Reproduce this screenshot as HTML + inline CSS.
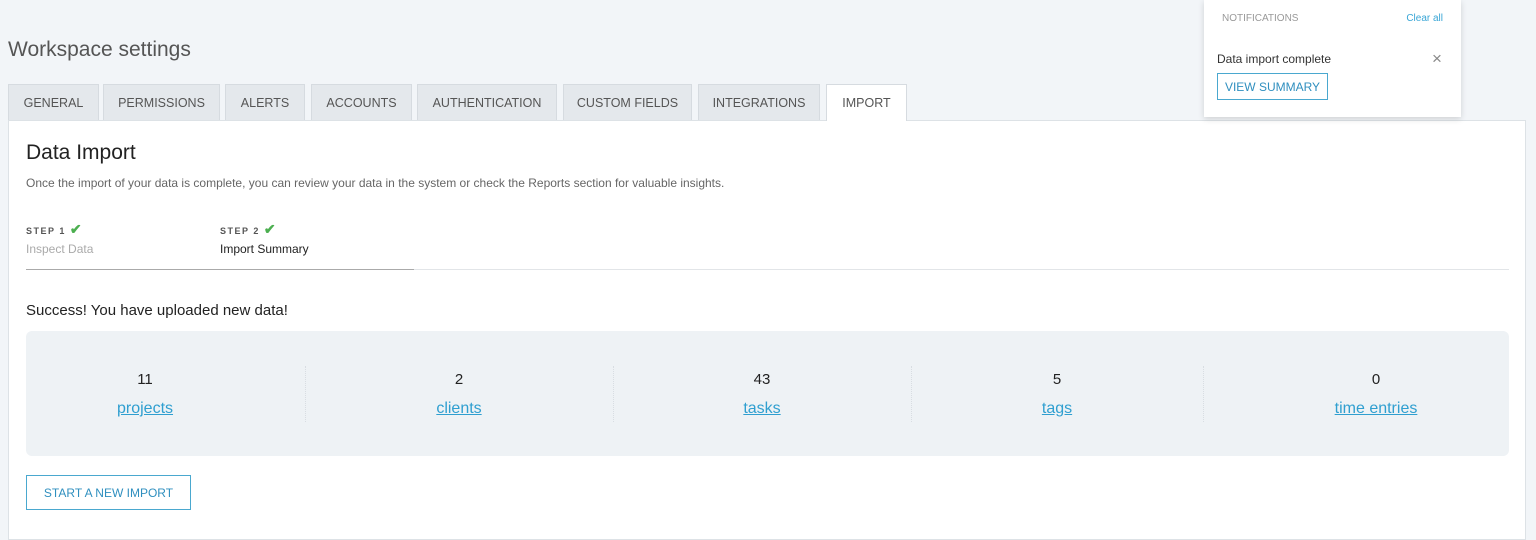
<!DOCTYPE html>
<html><head><style>
*{margin:0;padding:0;box-sizing:border-box}
body{width:1536px;height:521px;overflow:hidden;background:#f2f5f8;font-family:"Liberation Sans",sans-serif;position:relative;color:#333}
.abs{position:absolute}
.tab{position:absolute;top:84px;height:36px;background:#e4e8ec;border:1px solid #d6dbe0;border-bottom:none;font-size:12.5px;color:#555;display:flex;align-items:center;justify-content:center}
.panel{position:absolute;left:8px;top:120px;width:1518px;height:420px;background:#fff;border:1px solid #dde2e6}
.stat{position:absolute;top:371px;text-align:center;width:200px}
.stat .n{font-size:15px;color:#222}
.stat a{display:block;margin-top:12px;font-size:16px;color:#2f9fd0;text-decoration:underline}
.div{position:absolute;top:366px;height:56px;border-left:1px dotted #d8dde2}
</style></head><body>
<div class="abs" style="left:8px;top:38px;font-size:21px;color:#555">Workspace settings</div>
<div class="panel"></div>
<div class="tab" style="left:8px;width:91px">GENERAL</div>
<div class="tab" style="left:103px;width:117px">PERMISSIONS</div>
<div class="tab" style="left:225px;width:80px">ALERTS</div>
<div class="tab" style="left:311px;width:101px">ACCOUNTS</div>
<div class="tab" style="left:417px;width:140px">AUTHENTICATION</div>
<div class="tab" style="left:563px;width:129px">CUSTOM FIELDS</div>
<div class="tab" style="left:698px;width:122px">INTEGRATIONS</div>
<div class="tab" style="left:826px;width:81px;background:#fff;height:37px">IMPORT</div>
<div class="abs" style="left:26px;top:141px;font-size:21px;color:#222">Data Import</div>
<div class="abs" style="left:26px;top:176px;font-size:12px;color:#666">Once the import of your data is complete, you can review your data in the system or check the Reports section for valuable insights.</div>
<div class="abs" style="left:26px;top:221px;font-size:9px;letter-spacing:1.5px;color:#555;font-weight:bold">STEP 1 <span style="color:#4caf50;font-size:14px">✔</span></div>
<div class="abs" style="left:220px;top:221px;font-size:9px;letter-spacing:1.5px;color:#555;font-weight:bold">STEP 2 <span style="color:#4caf50;font-size:14px">✔</span></div>
<div class="abs" style="left:26px;top:242px;font-size:12px;color:#aaa">Inspect Data</div>
<div class="abs" style="left:220px;top:242px;font-size:12px;color:#222">Import Summary</div>
<div class="abs" style="left:26px;top:269px;width:1483px;height:1px;background:#e2e5e8"></div>
<div class="abs" style="left:26px;top:269px;width:388px;height:1px;background:#aaa"></div>
<div class="abs" style="left:26px;top:302px;font-size:15px;color:#222">Success! You have uploaded new data!</div>
<div class="abs" style="left:26px;top:331px;width:1483px;height:125px;background:#eef2f5;border-radius:6px"></div>
<div class="div" style="left:305px"></div><div class="div" style="left:613px"></div><div class="div" style="left:911px"></div><div class="div" style="left:1203px"></div>
<div class="stat" style="left:45px"><div class="n">11</div><a>projects</a></div>
<div class="stat" style="left:359px"><div class="n">2</div><a>clients</a></div>
<div class="stat" style="left:662px"><div class="n">43</div><a>tasks</a></div>
<div class="stat" style="left:957px"><div class="n">5</div><a>tags</a></div>
<div class="stat" style="left:1276px"><div class="n">0</div><a>time entries</a></div>
<div class="abs" style="left:26px;top:475px;width:165px;height:35px;border:1px solid #4aa8cf;font-size:12px;color:#2f8fbf;display:flex;align-items:center;justify-content:center">START A NEW IMPORT</div>
<div class="abs" style="left:1204px;top:0;width:257px;height:117px;background:#fff;box-shadow:0 2px 6px rgba(0,0,0,.15)">
<div class="abs" style="left:18px;top:13px;font-size:10px;color:#999">NOTIFICATIONS</div>
<div class="abs" style="right:18px;top:13px;font-size:10px;color:#3aa6d6">Clear all</div>
<div class="abs" style="left:13px;top:52px;font-size:12px;color:#333">Data import complete</div>
<div class="abs" style="left:228px;top:49px;font-size:17px;color:#888">×</div>
<div class="abs" style="left:13px;top:73px;width:111px;height:27px;border:1px solid #4aa8cf;font-size:12px;color:#2f8fbf;display:flex;align-items:center;justify-content:center">VIEW SUMMARY</div>
</div>
</body></html>
